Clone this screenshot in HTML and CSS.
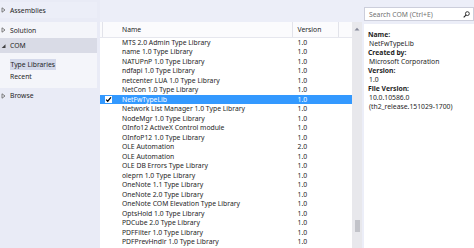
FILE: index.html
```html
<!DOCTYPE html>
<html>
<head>
<meta charset="utf-8">
<link rel="stylesheet" href="styles.css">
</head>
<body>
<div class="app">
  <nav class="nav">
    <div class="nav-item"><svg class="tri" viewBox="0 0 5 6"><path d="M1 0.8 L4 3 L1 5.2 Z" fill="none" stroke="#707070" stroke-width="0.9"/></svg>Assemblies</div>
    <div class="nav-item light"><svg class="tri" viewBox="0 0 5 6"><path d="M1 0.8 L4 3 L1 5.2 Z" fill="none" stroke="#707070" stroke-width="0.9"/></svg>Solution</div>
    <div class="nav-item sel"><svg class="tri" viewBox="0 0 5 6"><path d="M4.5 1.2 L4.5 5 L0.7 5 Z" fill="#404040"/></svg>COM</div>
    <div class="sub">
      <div class="sub-item"><span class="active">Type Libraries</span></div>
      <div class="sub-item">Recent</div>
    </div>
    <div class="nav-item browse"><svg class="tri" viewBox="0 0 5 6"><path d="M1 0.8 L4 3 L1 5.2 Z" fill="none" stroke="#707070" stroke-width="0.9"/></svg>Browse</div>
  </nav>

  <main class="center">
    <div class="list">
      <div class="row head">
        <div class="h-chk"></div>
        <div class="h-name">Name</div>
        <div class="h-ver">Version</div>
        <div class="h-pad"></div>
      </div>
      <div class="row"><div class="c-chk"></div><div class="c-name">MTS 2.0 Admin Type Library</div><div class="c-ver">1.0</div></div>
      <div class="row"><div class="c-chk"></div><div class="c-name">name 1.0 Type Library</div><div class="c-ver">1.0</div></div>
      <div class="row"><div class="c-chk"></div><div class="c-name">NATUPnP 1.0 Type Library</div><div class="c-ver">1.0</div></div>
      <div class="row"><div class="c-chk"></div><div class="c-name">ndfapi 1.0 Type Library</div><div class="c-ver">1.0</div></div>
      <div class="row"><div class="c-chk"></div><div class="c-name">netcenter LUA 1.0 Type Library</div><div class="c-ver">1.0</div></div>
      <div class="row"><div class="c-chk"></div><div class="c-name">NetCon 1.0 Type Library</div><div class="c-ver">1.0</div></div>
      <div class="row selected"><div class="c-chk"><span class="box"><svg viewBox="0 0 8 8"><path d="M1.3 4.2 L3.1 6 L6.8 1.6" fill="none" stroke="#000" stroke-width="1.4"/></svg></span></div><div class="c-name">NetFwTypeLib</div><div class="c-ver">1.0</div></div>
      <div class="row"><div class="c-chk"></div><div class="c-name">Network List Manager 1.0 Type Library</div><div class="c-ver">1.0</div></div>
      <div class="row"><div class="c-chk"></div><div class="c-name">NodeMgr 1.0 Type Library</div><div class="c-ver">1.0</div></div>
      <div class="row"><div class="c-chk"></div><div class="c-name">OInfo12 ActiveX Control module</div><div class="c-ver">1.0</div></div>
      <div class="row"><div class="c-chk"></div><div class="c-name">OInfoP12 1.0 Type Library</div><div class="c-ver">1.0</div></div>
      <div class="row"><div class="c-chk"></div><div class="c-name">OLE Automation</div><div class="c-ver">2.0</div></div>
      <div class="row"><div class="c-chk"></div><div class="c-name">OLE Automation</div><div class="c-ver">1.0</div></div>
      <div class="row"><div class="c-chk"></div><div class="c-name">OLE DB Errors Type Library</div><div class="c-ver">1.0</div></div>
      <div class="row"><div class="c-chk"></div><div class="c-name">oleprn 1.0 Type Library</div><div class="c-ver">1.0</div></div>
      <div class="row"><div class="c-chk"></div><div class="c-name">OneNote 1.1 Type Library</div><div class="c-ver">1.0</div></div>
      <div class="row"><div class="c-chk"></div><div class="c-name">OneNote 2.0 Type Library</div><div class="c-ver">1.0</div></div>
      <div class="row"><div class="c-chk"></div><div class="c-name">OneNote COM Elevation Type Library</div><div class="c-ver">1.0</div></div>
      <div class="row"><div class="c-chk"></div><div class="c-name">OptsHold 1.0 Type Library</div><div class="c-ver">1.0</div></div>
      <div class="row"><div class="c-chk"></div><div class="c-name">PDCube 2.0 Type Library</div><div class="c-ver">1.0</div></div>
      <div class="row"><div class="c-chk"></div><div class="c-name">PDFFilter 1.0 Type Library</div><div class="c-ver">1.0</div></div>
      <div class="row"><div class="c-chk"></div><div class="c-name">PDFPrevHndlr 1.0 Type Library</div><div class="c-ver">1.0</div></div>
      <div class="row"><div class="c-chk"></div><div class="c-name">PDFShell 1.0 Type Library</div><div class="c-ver">1.0</div></div>
    </div>
    <div class="scrollbar">
      <svg class="arrow" viewBox="0 0 6 4"><path d="M0.5 3.5 L3 0.8 L5.5 3.5 Z" fill="#868999"/></svg>
      <div class="track"><div class="thumb"></div></div>
    </div>
  </main>

  <aside class="side">
    <div class="search">
      <span class="ph">Search COM (Ctrl+E)</span>
      <svg class="mag" viewBox="0 0 8 8"><circle cx="5" cy="3" r="2.2" fill="none" stroke="#1e1e1e" stroke-width="1"/><path d="M3.4 4.6 L0.8 7.2" stroke="#1e1e1e" stroke-width="1.2"/></svg>
    </div>
    <div class="info">
      <div class="lbl">Name:</div>
      <div class="val">NetFwTypeLib</div>
      <div class="lbl">Created by:</div>
      <div class="val">Microsoft Corporation</div>
      <div class="lbl">Version:</div>
      <div class="val">1.0</div>
      <div class="lbl">File Version:</div>
      <div class="val">10.0.10586.0</div>
      <div class="val">(th2_release.151029-1700)</div>
    </div>
  </aside>
</div>
</body>
</html>
```

FILE: styles.css
```css
html, body {
  margin: 0;
  padding: 0;
}
body {
  width: 474px;
  height: 248px;
  overflow: hidden;
  background: #eceef8;
  font-family: "Noto Sans", "Open Sans", sans-serif;
  font-size: 6.8px;
  color: #1e1e1e;
}
.app {
  display: flex;
  height: 248px;
}

/* left navigation */
.nav {
  width: 100px;
  flex: none;
  padding-top: 2px;
  box-sizing: border-box;
  background: #e9ebf6;
  display: flex;
  flex-direction: column;
}
.nav-item {
  height: 16px;
  display: flex;
  align-items: center;
  padding-left: 1px;
  margin-right: 3px;
  background: #eceef8;
}
.nav-item.light {
  margin-top: 4px;
  background: #f4f5fa;
}
.nav-item.sel {
  height: 15px;
  background: #d9dbe6;
}
.nav-item.browse {
  height: 15px;
  background: #e9ebf6;
}
.tri {
  width: 5px;
  height: 6px;
  margin-right: 4px;
  flex: none;
}
.sub {
  background: #f4f5fa;
  margin-right: 3px;
  padding: 6px 0 6px 10px;
  display: flex;
  flex-direction: column;
  gap: 1px;
}
.sub-item {
  height: 11px;
  display: flex;
  align-items: center;
}
.sub-item .active {
  background: #d3d8ea;
  padding: 1px 0.5px;
}

/* center list */
.center {
  width: 262px;
  flex: none;
  padding-top: 22px;
  box-sizing: border-box;
  display: flex;
}
.list {
  width: 252px;
  flex: none;
  background: #ffffff;
  overflow: hidden;
}
.row {
  display: flex;
  height: 9.5px;
  align-items: center;
  white-space: nowrap;
}
.row.head {
  height: 15.5px;
  align-items: stretch;
  background: #fbfbfd;
  border-bottom: 1px solid #e6e7ee;
  box-sizing: border-box;
}
.h-chk,
.h-name,
.h-ver {
  display: flex;
  align-items: center;
  border-right: 1px solid #e2e3ea;
  box-sizing: border-box;
  flex: none;
}
.h-chk {
  width: 3px;
}
.h-name {
  width: 190px;
  padding-left: 19px;
}
.h-ver {
  width: 46px;
  padding-left: 4.5px;
}
.h-pad {
  flex: 1;
}
.c-chk {
  width: 13px;
  flex: none;
  display: flex;
  align-items: center;
}
.c-name {
  width: 180px;
  flex: none;
  padding-left: 9px;
  box-sizing: border-box;
}
.c-ver {
  width: 46px;
  flex: none;
  padding-left: 4.5px;
  box-sizing: border-box;
}
.row.selected {
  background: #3399ff;
  color: #ffffff;
}
.box {
  width: 7px;
  height: 7px;
  background: #ffffff;
  margin-left: 5px;
  display: block;
  flex: none;
}
.box svg {
  width: 7px;
  height: 7px;
  display: block;
}

/* scrollbar */
.scrollbar {
  width: 10px;
  flex: none;
  background: #e8e8ec;
  display: flex;
  flex-direction: column;
  align-items: center;
}
.arrow {
  width: 6px;
  height: 4px;
  margin-top: 5px;
}
.track {
  flex: 1;
  width: 100%;
  position: relative;
}
.thumb {
  position: absolute;
  left: 3px;
  width: 5px;
  top: 189px;
  height: 12px;
  background: #c2c3c9;
}

/* right panel */
.side {
  flex: 1;
  display: flex;
  flex-direction: column;
  padding-left: 2px;
}
.search {
  margin-top: 7px;
  height: 14px;
  background: #ffffff;
  border: 1px solid #cccedb;
  box-sizing: border-box;
  display: flex;
  align-items: center;
  padding: 0 3px 0 4px;
}
.ph {
  flex: 1;
  color: #717171;
}
.mag {
  width: 7px;
  height: 7px;
}
.info {
  margin-top: 3px;
  flex: 1;
  background: #ffffff;
  padding: 6px 0 0 4px;
  line-height: 9px;
}
.lbl {
  font-weight: bold;
}
.val {
  padding-left: 1px;
}
```
